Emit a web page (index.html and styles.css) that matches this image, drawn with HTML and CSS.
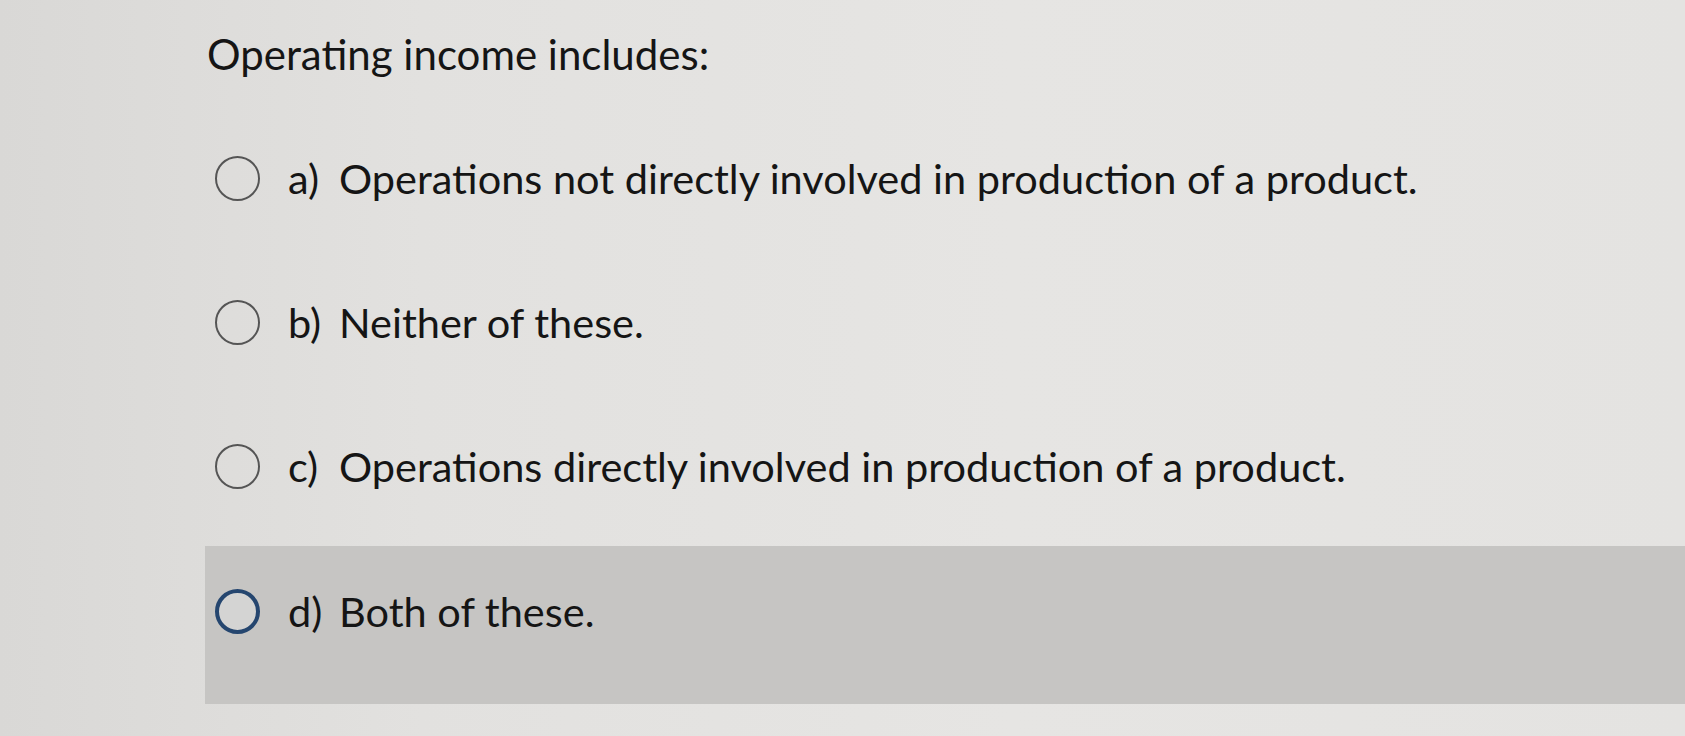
FILE: index.html
```html
<!DOCTYPE html>
<html>
<head>
<meta charset="utf-8">
<link rel="stylesheet" href="styles.css">
</head>
<body>
<div class="page">
  <h1 class="question">Operating income includes:</h1>
  <div class="options">
    <div class="option">
      <span class="radio"></span>
      <span class="letter">a)</span>
      <span class="text">Operations not directly involved in production of a product.</span>
    </div>
    <div class="option">
      <span class="radio"></span>
      <span class="letter">b)</span>
      <span class="text">Neither of these.</span>
    </div>
    <div class="option">
      <span class="radio"></span>
      <span class="letter">c)</span>
      <span class="text">Operations directly involved in production of a product.</span>
    </div>
    <div class="option option-focused">
      <span class="radio radio-focused"></span>
      <span class="letter">d)</span>
      <span class="text">Both of these.</span>
    </div>
  </div>
</div>
</body>
</html>
```

FILE: styles.css
```css
html, body {
  margin: 0;
  padding: 0;
  height: 100%;
}
body {
  background: linear-gradient(90deg, #d9d8d6 0%, #e2e1df 25%, #e6e5e3 60%, #e4e3e1 100%);
  font-family: "Lato", "Liberation Sans", sans-serif;
  color: #151515;
  overflow: hidden;
}
.page {
  padding-left: 205px;
}
.question {
  margin: 0;
  padding: 28px 0 0 2px;
  font-size: 42px;
  font-weight: 400;
  line-height: 52px;
}
.options {
  margin-top: 26px;
  display: flex;
  flex-direction: column;
}
.option {
  display: flex;
  align-items: center;
  height: 144px;
  padding-left: 10px;
  font-size: 41.5px;
}
.radio {
  flex: none;
  width: 41px;
  height: 41px;
  border: 2px solid #555555;
  border-radius: 50%;
  margin-right: 28px;
}
.letter {
  width: 51px;
  flex: none;
}
.option-focused {
  margin-top: 8px;
  background: #c6c5c3;
  height: 158px;
  align-items: flex-start;
  box-sizing: border-box;
  padding-top: 43px;
}
.option-focused .letter,
.option-focused .text {
  line-height: 45px;
}
.radio-focused {
  width: 37px;
  height: 37px;
  border: 4px solid #25466f;
  background: #d4d4d3;
}
```
